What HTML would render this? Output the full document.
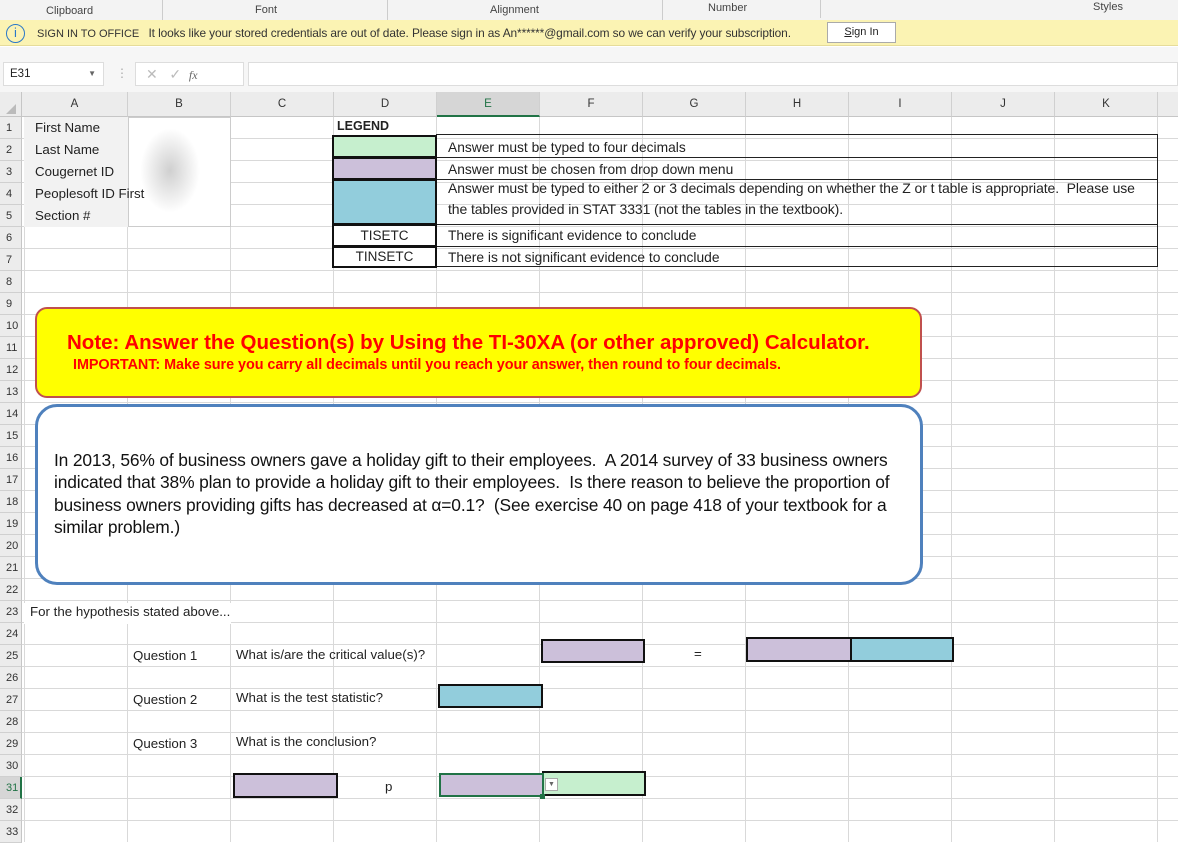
<!DOCTYPE html>
<html><head><meta charset="utf-8"><style>
*{box-sizing:border-box;margin:0;padding:0}
body{width:1178px;height:842px;position:relative;overflow:hidden;background:#fff;font-family:"Liberation Sans",sans-serif;font-size:12px;color:#222}
.a{position:absolute;white-space:nowrap}
.grid{position:absolute;left:22px;top:117px;width:1156px;height:725px;
background-image:linear-gradient(to right,#d9d9d9 1px,transparent 1px),linear-gradient(to bottom,#d9d9d9 1px,transparent 1px);
background-size:103px 22px;background-position:2px -1px}
.rh{position:absolute;left:0;width:22px;height:22px;background:#ececec;border-bottom:1px solid #d0d0d0;border-right:1px solid #c6c6c6;font-size:11px;padding-left:6px;line-height:22px;color:#333}
.ch{position:absolute;top:92px;height:25px;width:103px;background:#ececec;border-right:1px solid #d0d0d0;border-bottom:1px solid #c6c6c6;text-align:center;line-height:24px;font-size:11.5px;color:#333}
.box{position:absolute;border:2px solid #111}
.t{position:absolute;white-space:nowrap;font-size:13.3px}
</style></head><body>
<div class="a" style="left:0;top:0;width:1178px;height:20px;background:#f3f3f3"></div>
<div class="a" style="left:46px;top:5px;font-size:11px;color:#444">Clipboard</div>
<div class="a" style="left:255px;top:4px;font-size:11px;color:#444">Font</div>
<div class="a" style="left:490px;top:4px;font-size:11px;color:#444">Alignment</div>
<div class="a" style="left:708px;top:2px;font-size:11px;color:#444">Number</div>
<div class="a" style="left:1093px;top:1px;font-size:11px;color:#444">Styles</div>
<div class="a" style="left:162px;top:0;width:1px;height:20px;background:#ccc"></div>
<div class="a" style="left:387px;top:0;width:1px;height:20px;background:#ccc"></div>
<div class="a" style="left:662px;top:0;width:1px;height:20px;background:#ccc"></div>
<div class="a" style="left:820px;top:0;width:1px;height:18px;background:#ccc"></div>
<div class="a" style="left:0;top:20px;width:1178px;height:26px;background:#fbf3b3;border-bottom:1px solid #e6dc9a"></div>
<div class="a" style="left:6px;top:24px;width:19px;height:19px;border:1.5px solid #2a78c8;border-radius:50%;color:#2a78c8;text-align:center;font-size:13px;line-height:16px">i</div>
<div class="a" style="left:37px;top:26px;font-size:11px;color:#333">SIGN IN TO OFFICE&nbsp;&nbsp; <span style="font-size:11.9px;letter-spacing:-0.1px">It looks like your stored credentials are out of date. Please sign in as An******@gmail.com so we can verify your subscription.</span></div>
<div class="a" style="left:827px;top:22px;width:69px;height:21px;background:#fff;border:1px solid #aaa;text-align:center;line-height:19px;font-size:11px"><u>S</u>ign In</div>
<div class="a" style="left:0;top:47px;width:1178px;height:45px;background:#f6f6f6"></div>
<div class="a" style="left:3px;top:62px;width:101px;height:24px;background:#fff;border:1px solid #ddd;padding-left:6px;line-height:22px;font-size:11.5px">E31<span style="position:absolute;right:7px;font-size:8px;color:#666">▼</span></div>
<div class="a" style="left:116px;top:66px;color:#aaa">⋮</div>
<div class="a" style="left:135px;top:62px;width:109px;height:24px;background:#fff;border:1px solid #ddd;color:#bbb;font-size:14px;line-height:22px;padding-left:10px">✕ &nbsp; ✓ &nbsp;<i style="font-family:'Liberation Serif';font-size:12px;color:#666">fx</i></div>
<div class="a" style="left:248px;top:62px;width:930px;height:24px;background:#fff;border:1px solid #ddd"></div>
<div class="grid"></div>
<div class="a" style="left:0;top:92px;width:22px;height:25px;background:#ececec;border-right:1px solid #c6c6c6;border-bottom:1px solid #c6c6c6"></div>
<div class="a" style="left:6px;top:104px;width:0;height:0;border-left:10px solid transparent;border-bottom:10px solid #bbb"></div>
<div class="ch" style="left:22px;width:106px">A</div>
<div class="ch" style="left:128px">B</div>
<div class="ch" style="left:231px">C</div>
<div class="ch" style="left:334px">D</div>
<div class="ch" style="left:437px;background:#d6d6d6;border-bottom:2px solid #217346;color:#217346">E</div>
<div class="ch" style="left:540px">F</div>
<div class="ch" style="left:643px">G</div>
<div class="ch" style="left:746px">H</div>
<div class="ch" style="left:849px">I</div>
<div class="ch" style="left:952px">J</div>
<div class="ch" style="left:1055px">K</div>
<div class="ch" style="left:1158px;width:30px"></div>
<div class="rh" style="top:117px">1</div><div class="rh" style="top:139px">2</div><div class="rh" style="top:161px">3</div><div class="rh" style="top:183px">4</div><div class="rh" style="top:205px">5</div><div class="rh" style="top:227px">6</div><div class="rh" style="top:249px">7</div><div class="rh" style="top:271px">8</div><div class="rh" style="top:293px">9</div><div class="rh" style="top:315px">10</div><div class="rh" style="top:337px">11</div><div class="rh" style="top:359px">12</div><div class="rh" style="top:381px">13</div><div class="rh" style="top:403px">14</div><div class="rh" style="top:425px">15</div><div class="rh" style="top:447px">16</div><div class="rh" style="top:469px">17</div><div class="rh" style="top:491px">18</div><div class="rh" style="top:513px">19</div><div class="rh" style="top:535px">20</div><div class="rh" style="top:557px">21</div><div class="rh" style="top:579px">22</div><div class="rh" style="top:601px">23</div><div class="rh" style="top:623px">24</div><div class="rh" style="top:645px">25</div><div class="rh" style="top:667px">26</div><div class="rh" style="top:689px">27</div><div class="rh" style="top:711px">28</div><div class="rh" style="top:733px">29</div><div class="rh" style="top:755px">30</div><div class="rh" style="top:777px;background:#d6d6d6;border-right:2px solid #217346;color:#217346">31</div><div class="rh" style="top:799px">32</div><div class="rh" style="top:821px">33</div>
<div class="a" style="left:24px;top:117px;width:104px;height:110px;background:#f2f2f2"></div>
<div class="a" style="left:128px;top:117px;width:103px;height:110px;background:#fff;border:1px solid #ccc"></div>
<div class="t" style="left:35px;top:120px">First Name</div>
<div class="t" style="left:35px;top:142px">Last Name</div>
<div class="t" style="left:35px;top:164px">Cougernet ID</div>
<div class="t" style="left:35px;top:186px">Peoplesoft ID First</div>
<div class="t" style="left:35px;top:208px">Section #</div>
<div class="a" style="left:140px;top:128px;width:60px;height:85px;background:radial-gradient(#bbb,transparent 70%);opacity:.7"></div>
<div class="t" style="left:337px;top:119px;font-weight:bold;font-size:12.5px">LEGEND</div>
<div class="a" style="left:436px;top:134px;width:722px;height:133px;border:1px solid #222"></div>
<div class="a" style="left:436px;top:157px;width:722px;height:1px;background:#222"></div>
<div class="a" style="left:436px;top:179px;width:722px;height:1px;background:#222"></div>
<div class="a" style="left:436px;top:224px;width:722px;height:1px;background:#222"></div>
<div class="a" style="left:436px;top:246px;width:722px;height:1px;background:#222"></div>
<div class="box" style="left:332px;top:135px;width:105px;height:23px;background:#c6efce"></div>
<div class="box" style="left:332px;top:157px;width:105px;height:23px;background:#ccc0da"></div>
<div class="box" style="left:332px;top:179px;width:105px;height:46px;background:#92cddc"></div>
<div class="box" style="left:332px;top:224px;width:105px;height:23px;background:#fff;text-align:center;font-size:13.5px;line-height:19px">TISETC</div>
<div class="box" style="left:332px;top:246px;width:105px;height:22px;background:#fff;text-align:center;font-size:13.5px;line-height:18px">TINSETC</div>
<div class="t" style="left:448px;top:140px;font-size:13.8px">Answer must be typed to four decimals</div>
<div class="t" style="left:448px;top:162px;font-size:13.8px">Answer must be chosen from drop down menu</div>
<div class="t" style="left:448px;top:180px;font-size:14px;letter-spacing:-0.1px">Answer must be typed to either 2 or 3 decimals depending on whether the Z or t table is appropriate.&nbsp; Please use</div>
<div class="t" style="left:448px;top:201px;font-size:14px;letter-spacing:-0.1px">the tables provided in STAT 3331 (not the tables in the textbook).</div>
<div class="t" style="left:448px;top:228px;font-size:13.8px">There is significant evidence to conclude</div>
<div class="t" style="left:448px;top:250px;font-size:13.8px">There is not significant evidence to conclude</div>
<div class="a" style="left:35px;top:307px;width:887px;height:91px;background:#ffff00;border:2px solid #c0504d;border-radius:12px"></div>
<div class="t" style="left:67px;top:331px;color:#ff0000;font-weight:bold;font-size:20.5px">Note: Answer the Question(s) by Using the TI-30XA (or other approved) Calculator.</div>
<div class="t" style="left:73px;top:357px;color:#ff0000;font-weight:bold;font-size:14.4px;letter-spacing:-0.05px">IMPORTANT: Make sure you carry all decimals until you reach your answer, then round to four decimals.</div>
<div class="a" style="left:35px;top:404px;width:888px;height:181px;background:#fff;border:3px solid #4f81bd;border-radius:22px"></div>
<div class="a" style="left:54px;top:449px;font-size:17.4px;line-height:22.3px;color:#111;white-space:normal;width:850px;letter-spacing:-0.15px">In 2013, 56% of business owners gave a holiday gift to their employees.&nbsp; A 2014 survey of 33 business owners indicated that 38% plan to provide a holiday gift to their employees.&nbsp; Is there reason to believe the proportion of business owners providing gifts has decreased at α=0.1?&nbsp; (See exercise 40 on page 418 of your textbook for a similar problem.)</div>
<div class="a" style="left:24px;top:603px;width:207px;height:21px;background:#fff"></div>
<div class="t" style="left:30px;top:604px">For the hypothesis stated above...</div>
<div class="t" style="left:133px;top:648px">Question 1</div>
<div class="t" style="left:236px;top:647px">What is/are the critical value(s)?</div>
<div class="t" style="left:133px;top:692px">Question 2</div>
<div class="t" style="left:236px;top:690px">What is the test statistic?</div>
<div class="t" style="left:133px;top:736px">Question 3</div>
<div class="t" style="left:236px;top:734px">What is the conclusion?</div>
<div class="box" style="left:541px;top:639px;width:104px;height:24px;background:#ccc0da"></div>
<div class="t" style="left:694px;top:646px">=</div>
<div class="box" style="left:746px;top:637px;width:106px;height:25px;background:#ccc0da"></div>
<div class="box" style="left:850px;top:637px;width:104px;height:25px;background:#92cddc"></div>
<div class="box" style="left:438px;top:684px;width:105px;height:24px;background:#92cddc"></div>
<div class="box" style="left:233px;top:773px;width:105px;height:25px;background:#ccc0da"></div>
<div class="t" style="left:385px;top:779px">p</div>
<div class="box" style="left:542px;top:771px;width:104px;height:25px;background:#c6efce"></div>
<div class="a" style="left:439px;top:773px;width:105px;height:24px;background:#ccc0da;border:2px solid #217346"></div>
<div class="a" style="left:545px;top:778px;width:13px;height:13px;background:#fff;border:1px solid #aaa;font-size:7px;color:#666;text-align:center;line-height:12px">▼</div>
<div class="a" style="left:540px;top:794px;width:5px;height:5px;background:#217346"></div>
</body></html>
